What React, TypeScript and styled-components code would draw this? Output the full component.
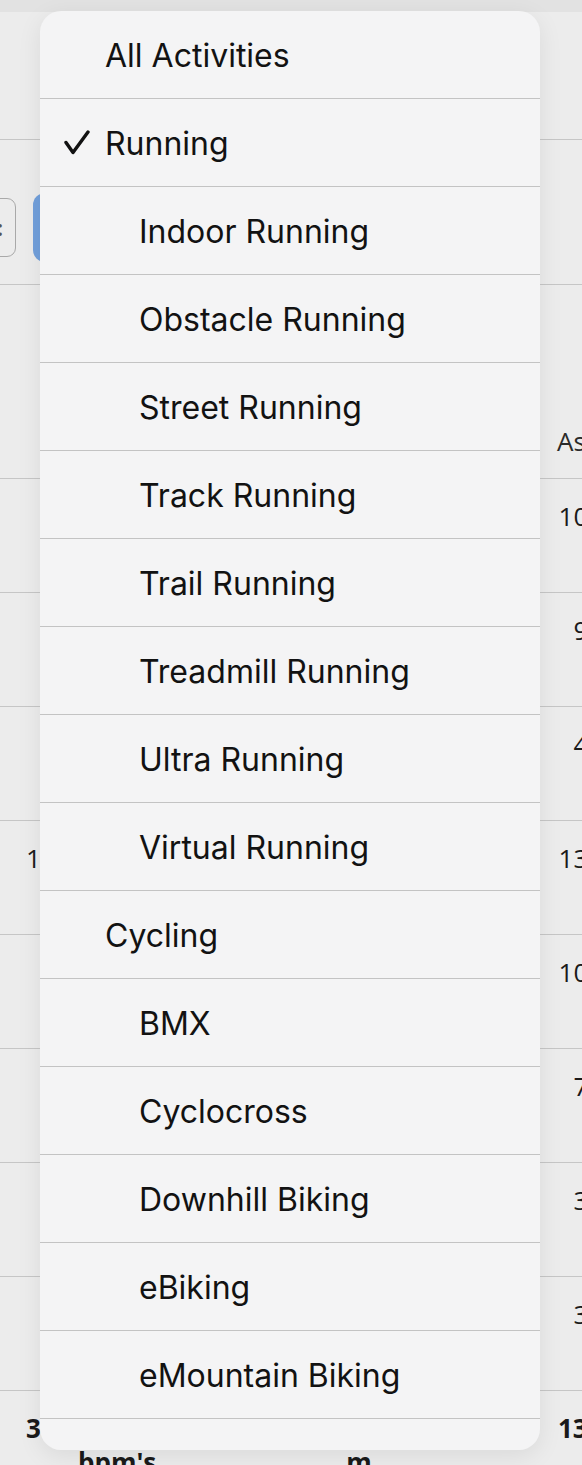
import styled, { createGlobalStyle } from "styled-components";

const GlobalStyle = createGlobalStyle`
    html, body {
        margin: 0;
        padding: 0;
        background: #ececec;
    }
    body {
        font-family: "Open Sans", "Liberation Sans", sans-serif;
        overflow: hidden;
    }
`;

const StyledPage = styled.div`
    position: relative;
    width: 582px;
    height: 1465px;
    overflow: hidden;
    background: #ececec;
`;

const StyledTopStrip = styled.div`
    height: 12px;
    background: #e2e2e2;
`;

const StyledRow = styled.div<{ $height: number; $noLine?: boolean }>`
    display: grid;
    grid-template-columns: 40px 500px 140px;
    height: ${(p) => p.$height}px;
    border-bottom: ${(p) => (p.$noLine ? "none" : "1px solid #c6c6c6")};
`;

const StyledLeftCell = styled.div<{ $bold?: boolean }>`
    padding: 24px 0 0 26px;
    font-size: 26px;
    line-height: 26px;
    color: #1a1a1a;
    font-weight: ${(p) => (p.$bold ? 700 : 400)};
    white-space: nowrap;
`;

const StyledRightCell = styled.div<{ $bold?: boolean }>`
    width: 70px;
    padding-top: 24px;
    font-size: 26px;
    line-height: 26px;
    color: #1a1a1a;
    text-align: right;
    font-weight: ${(p) => (p.$bold ? 700 : 400)};
    white-space: nowrap;
`;

const StyledHeaderCell = styled.div`
    align-self: end;
    padding: 0 0 24px 17px;
    font-size: 26px;
    line-height: 26px;
    color: #2a2a2a;
    white-space: nowrap;
`;

const StyledLeftToolbar = styled.div`
    display: flex;
    align-items: center;
    gap: 17px;
    padding-top: 30px;
    margin-left: -26px;
`;

const StyledGhostButton = styled.div`
    flex-shrink: 0;
    width: 42px;
    height: 59px;
    border: 1.5px solid #a9a9a9;
    border-radius: 9px;
    box-sizing: border-box;
    display: flex;
    align-items: center;
    justify-content: flex-end;
    padding-right: 12px;
    font-size: 22px;
    font-weight: 700;
    color: #555;
`;

const StyledBlueButton = styled.div`
    flex-shrink: 0;
    width: 40px;
    height: 69px;
    border-radius: 12px;
    background: #72a0dc;
`;

const StyledFooterLine = styled.div`
    display: flex;
    padding: 0 0 0 78px;
    gap: 190px;
    font-size: 26px;
    line-height: 26px;
    font-weight: 700;
    color: #1a1a1a;
    white-space: nowrap;
`;

const StyledMenu = styled.div`
    position: absolute;
    top: 11px;
    left: 40px;
    width: 500px;
    height: 1439px;
    overflow: hidden;
    border-radius: 21px;
    background: #f4f4f5;
    box-shadow: 0 6px 24px rgba(0, 0, 0, 0.08);
    font-family: "Inter", "Liberation Sans", sans-serif;
`;

const StyledMenuItem = styled.div<{ $sub?: boolean }>`
    position: relative;
    display: flex;
    align-items: center;
    box-sizing: border-box;
    height: 88px;
    border-bottom: 1px solid #c3c3c3;
    padding: 2px 0 0 ${(p) => (p.$sub ? 99 : 65)}px;
    font-size: 32px;
    color: #121212;
`;

const StyledCheck = styled.svg`
    position: absolute;
    left: 24px;
    top: 31px;
    width: 26px;
    height: 26px;
`;

const rows = [
    { left: "", right: "10.2" },
    { left: "", right: "9.8" },
    { left: "", right: "4.5" },
    { left: "1", right: "13.1" },
    { left: "", right: "10.7" },
    { left: "", right: "7.3" },
    { left: "", right: "3.4" },
    { left: "", right: "3.9" },
];

const items = [
    { label: "All Activities", sub: false },
    { label: "Running", sub: false, checked: true },
    { label: "Indoor Running", sub: true },
    { label: "Obstacle Running", sub: true },
    { label: "Street Running", sub: true },
    { label: "Track Running", sub: true },
    { label: "Trail Running", sub: true },
    { label: "Treadmill Running", sub: true },
    { label: "Ultra Running", sub: true },
    { label: "Virtual Running", sub: true },
    { label: "Cycling", sub: false },
    { label: "BMX", sub: true },
    { label: "Cyclocross", sub: true },
    { label: "Downhill Biking", sub: true },
    { label: "eBiking", sub: true },
    { label: "eMountain Biking", sub: true },
    { label: "", sub: true },
];

export default function App() {
    return (
        <StyledPage>
            <GlobalStyle />
            <StyledTopStrip />
            <StyledRow $height={127} />
            <StyledRow $height={144}>
                <StyledLeftToolbar>
                    <StyledGhostButton>:</StyledGhostButton>
                    <StyledBlueButton />
                </StyledLeftToolbar>
            </StyledRow>
            <StyledRow $height={193}>
                <div />
                <div />
                <StyledHeaderCell>Ascent</StyledHeaderCell>
            </StyledRow>
            {rows.map((r, i) => (
                <StyledRow $height={113} key={i}>
                    <StyledLeftCell>{r.left}</StyledLeftCell>
                    <div />
                    <StyledRightCell>{r.right}</StyledRightCell>
                </StyledRow>
            ))}
            <StyledRow $height={58} $noLine>
                <StyledLeftCell $bold>3.</StyledLeftCell>
                <div />
                <StyledRightCell $bold>13.2</StyledRightCell>
            </StyledRow>
            <StyledFooterLine>
                <span>bpm's</span>
                <span>m</span>
            </StyledFooterLine>

            <StyledMenu>
                {items.map((item, i) => (
                    <StyledMenuItem $sub={item.sub} key={i}>
                        {item.checked && (
                            <StyledCheck viewBox="0 0 26 26">
                                <path
                                    d="M2 12.5 L9 22.5 L24 2"
                                    fill="none"
                                    stroke="#121212"
                                    strokeWidth="3.4"
                                    strokeLinecap="round"
                                    strokeLinejoin="round"
                                />
                            </StyledCheck>
                        )}
                        {item.label}
                    </StyledMenuItem>
                ))}
            </StyledMenu>
        </StyledPage>
    );
}
